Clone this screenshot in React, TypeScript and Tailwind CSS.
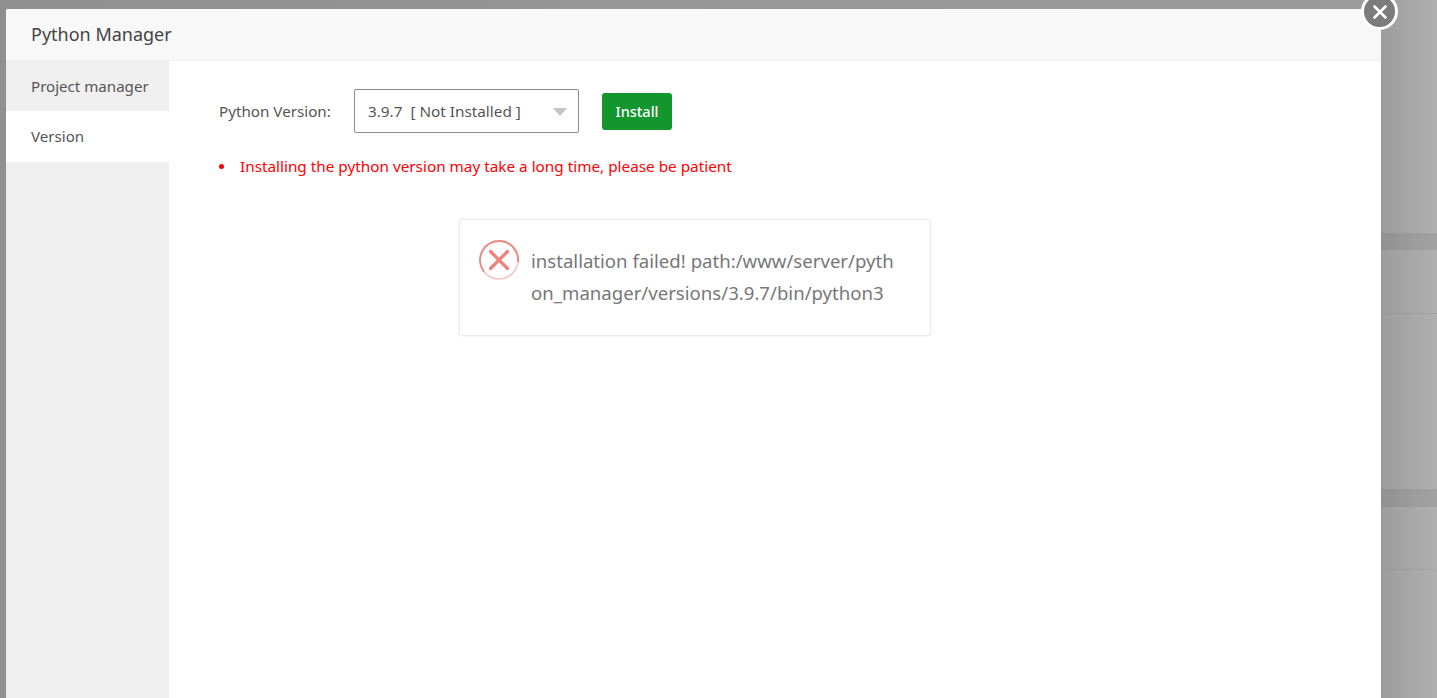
import React from "react";

function Page() {
  return (
    <div className="absolute inset-0 flex flex-col bg-[linear-gradient(90deg,#8f8f8f_0px,#979797_700px,#9c9c9c_1381px,#b0b0b0_1437px)]">
      <div className="h-[233px] shrink-0" />
      <div className="ml-[1381px] h-[17px] shrink-0 bg-black/[0.07]" />
      <div className="ml-[1381px] h-[64px] shrink-0 border-b border-black/[0.06]" />
      <div className="h-[175px] shrink-0" />
      <div className="ml-[1381px] h-[18px] shrink-0 bg-black/[0.07]" />
      <div className="ml-[1381px] h-[63px] shrink-0 border-b border-black/[0.06]" />
    </div>
  );
}

function ErrorIcon() {
  return (
    <svg width="42" height="42" viewBox="0 0 42 42" className="shrink-0">
      <circle cx="21" cy="21" r="19" fill="none" stroke="#f6c6c1" strokeWidth="1.6" />
      <path d="M6 32.5 A19 19 0 0 1 21 2 A19 19 0 0 1 40 23" fill="none" stroke="#ec8a82" strokeWidth="2" />
      <path d="M12.5 12.5 L29.5 29.5 M29.5 12.5 L12.5 29.5" stroke="#ee8279" strokeWidth="3.2" strokeLinecap="round" />
    </svg>
  );
}

export default function App() {
  return (
    <div className="relative h-[698px] w-[1437px] overflow-hidden font-['Noto_Sans',sans-serif]">
      <Page />
      <div className="absolute left-[6px] top-[9px] flex h-[689px] w-[1375px] flex-col overflow-hidden rounded-tl-[2px] bg-white">
        <div className="flex h-[52px] shrink-0 items-center border-b border-[#eeeeee] bg-[#f8f8f8] pl-[25px] text-[18px] text-[#444444]">
          Python Manager
        </div>
        <div className="flex min-h-0 flex-1">
          <div className="flex w-[163px] shrink-0 flex-col bg-[#efefef] text-[15.1px] text-[#555555]">
            <div className="flex h-[50px] items-center pl-[25px]">Project manager</div>
            <div className="flex h-[51px] items-center bg-white pl-[25px]">Version</div>
          </div>
          <div className="flex-1 pl-[50px] pt-[28px]">
            <div className="flex h-[44px] items-center">
              <span className="w-[135px] text-[15.2px] text-[#555555]">Python Version:</span>
              <div className="relative flex h-[44px] w-[225px] items-center rounded-[2px] border border-[#8a8a8a] pl-[13px] text-[15.3px] text-[#555555]">
                <span className="whitespace-pre">3.9.7  [ Not Installed ]</span>
                <span className="absolute right-[11px] top-[18px] h-0 w-0 border-x-[7px] border-t-[8px] border-x-transparent border-t-[#c4c4c4]" />
              </div>
              <button className="ml-[23px] h-[37px] w-[70px] rounded-[3px] bg-[#14962e] pt-[1px] text-[14.5px] font-medium text-white">
                Install
              </button>
            </div>
            <ul className="mt-[23px] text-[15.3px] text-[#ff0000]">
              <li className="flex h-[20px] items-center whitespace-nowrap">
                <span className="mr-[16px] h-[5px] w-[5px] rounded-full bg-[#ff0000]" />
                Installing the python version may take a long time, please be patient
              </li>
            </ul>
            <div className="ml-[240px] mt-[43px] flex h-[117px] w-[472px] rounded-[3px] border border-[#ebebeb] bg-white pl-[18px] pt-[19px] shadow-[0_0_2px_rgba(0,0,0,0.08)]">
              <ErrorIcon />
              <div className="ml-[11px] w-[370px] break-all pt-[6px] text-[18.6px] leading-[32px] text-[#777777]">
                installation failed! path:/www/server/python_manager/versions/3.9.7/bin/python3
              </div>
            </div>
          </div>
        </div>
      </div>
      <div className="absolute left-[1361px] top-[-7px] flex h-[37px] w-[37px] items-center justify-center rounded-full border-[3px] border-white bg-[#7b7b7b]">
        <svg width="18" height="18" viewBox="0 0 18 18">
          <path d="M3.5 3.5 L14.5 14.5 M14.5 3.5 L3.5 14.5" stroke="#ffffff" strokeWidth="2.6" strokeLinecap="round" />
        </svg>
      </div>
    </div>
  );
}
